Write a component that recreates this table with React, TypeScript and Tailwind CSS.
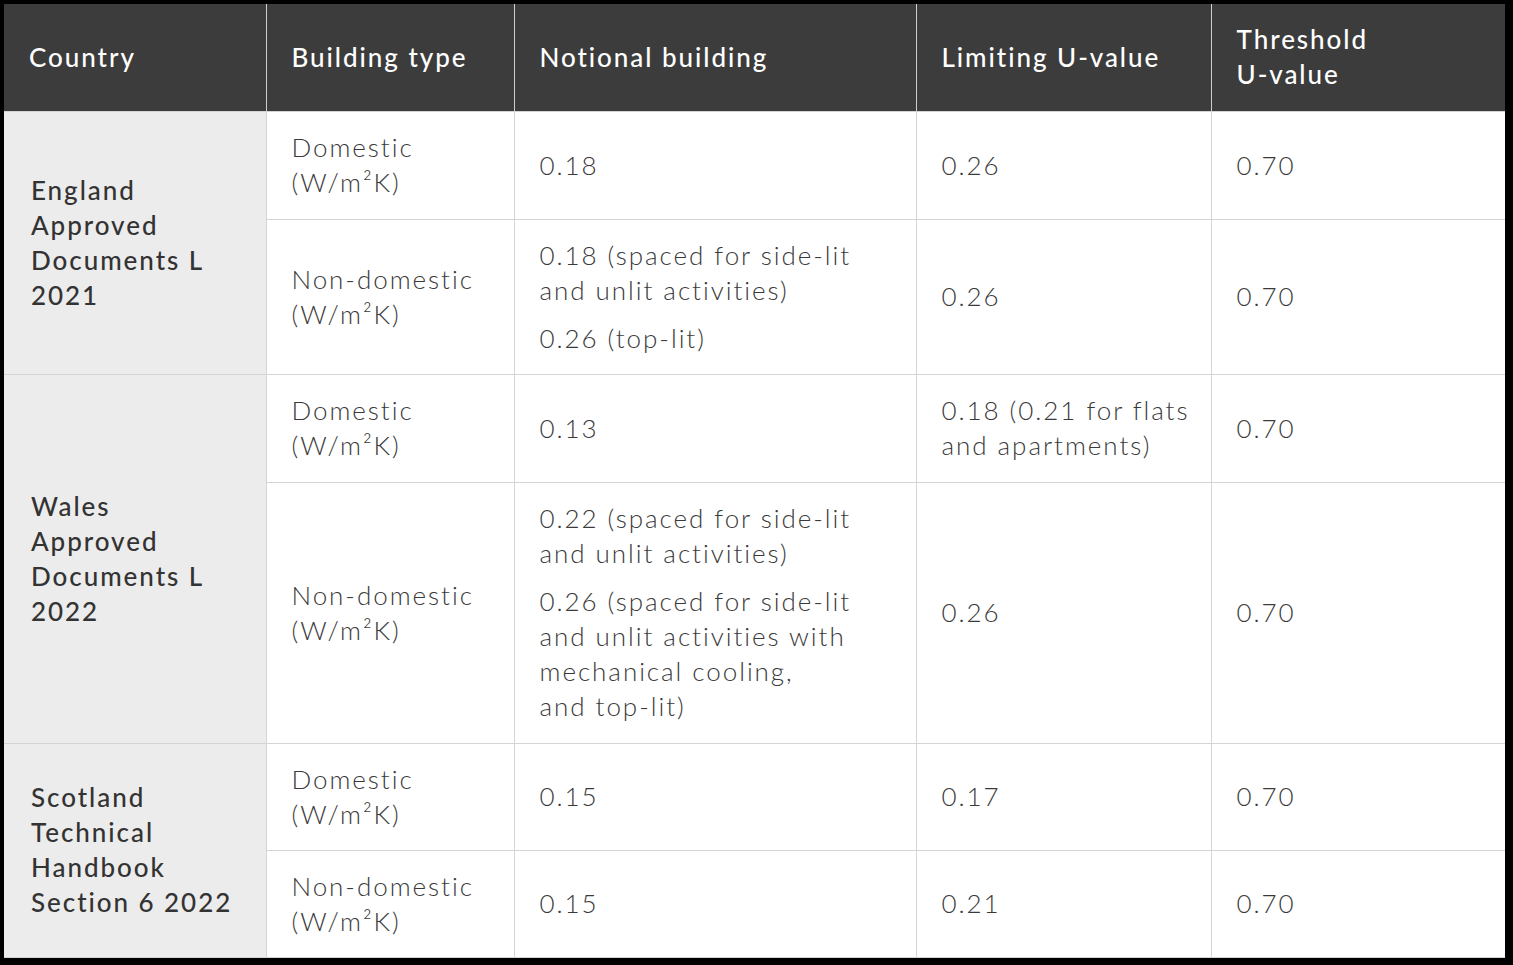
const unit = 'W/m²K'

type Row = {
  type: string
  notional: string[]
  limiting: string
  threshold: string
  h: string
}

type Group = { country: string[]; rows: Row[] }

const groups: Group[] = [
  {
    country: ['England', 'Approved', 'Documents L', '2021'],
    rows: [
      { type: 'Domestic', notional: ['0.18'], limiting: '0.26', threshold: '0.70', h: 'h-[108px]' },
      {
        type: 'Non-domestic',
        notional: ['0.18 (spaced for side-lit and unlit activities)', '0.26 (top-lit)'],
        limiting: '0.26',
        threshold: '0.70',
        h: 'h-[155px]'
      }
    ]
  },
  {
    country: ['Wales', 'Approved', 'Documents L', '2022'],
    rows: [
      {
        type: 'Domestic',
        notional: ['0.13'],
        limiting: '0.18 (0.21 for flats and apartments)',
        threshold: '0.70',
        h: 'h-[108px]'
      },
      {
        type: 'Non-domestic',
        notional: [
          '0.22 (spaced for side-lit and unlit activities)',
          '0.26 (spaced for side-lit and unlit activities with mechanical cooling,\nand top-lit)'
        ],
        limiting: '0.26',
        threshold: '0.70',
        h: 'h-[261px]'
      }
    ]
  },
  {
    country: ['Scotland', 'Technical', 'Handbook', 'Section 6 2022'],
    rows: [
      { type: 'Domestic', notional: ['0.15'], limiting: '0.17', threshold: '0.70', h: 'h-[107px]' },
      { type: 'Non-domestic', notional: ['0.15'], limiting: '0.21', threshold: '0.70', h: 'h-[107px]' }
    ]
  }
]

const cell = 'border border-[#d4d4d4] px-[25px] py-[18px] align-middle text-left'
const body = 'font-light text-[#3a3a3a]'

export default function App() {
  return (
    <div
      className="min-h-[965px] bg-black pl-[4px] pt-[4px]"
      style={{ fontFamily: 'Lato, "Noto Sans", sans-serif' }}
    >
      <table className="w-[1501px] table-fixed border-collapse bg-white text-[26px] leading-[35px] tracking-[0.075em]">
        <colgroup>
          <col className="w-[262px]" />
          <col className="w-[248px]" />
          <col className="w-[402px]" />
          <col className="w-[295px]" />
          <col className="w-[294px]" />
        </colgroup>
        <thead>
          <tr className="h-[107px] bg-[#3c3c3c] text-white">
            {['Country', 'Building type', 'Notional building', 'Limiting U-value'].map((h) => (
              <th key={h} className="border-x border-[#cfcfcf] px-[25px] text-left font-medium first:border-l-0">
                {h}
              </th>
            ))}
            <th className="border-l border-[#cfcfcf] px-[25px] text-left font-medium">
              Threshold
              <br />
              U-value
            </th>
          </tr>
        </thead>
        <tbody>
          {groups.map((g) =>
            g.rows.map((r, i) => (
              <tr key={g.country[0] + r.type} className={r.h}>
                {i === 0 && (
                  <td
                    rowSpan={g.rows.length}
                    className={`${cell} border-l-0 bg-[#ececec] pl-[27px] font-medium text-[#333]`}
                  >
                    {g.country.map((c) => (
                      <div key={c} className="whitespace-nowrap">
                        {c}
                      </div>
                    ))}
                  </td>
                )}
                <td className={`${cell} ${body}`}>
                  {r.type}
                  <br />({unit})
                </td>
                <td className={`${cell} ${body}`}>
                  <div className="flex flex-col gap-[13px] pr-[30px]">
                    {r.notional.map((n) => (
                      <p key={n} className="whitespace-pre-line">
                        {n}
                      </p>
                    ))}
                  </div>
                </td>
                <td className={`${cell} ${body} pr-[20px]`}>{r.limiting}</td>
                <td className={`${cell} ${body} border-r-0`}>{r.threshold}</td>
              </tr>
            ))
          )}
        </tbody>
      </table>
    </div>
  )
}
